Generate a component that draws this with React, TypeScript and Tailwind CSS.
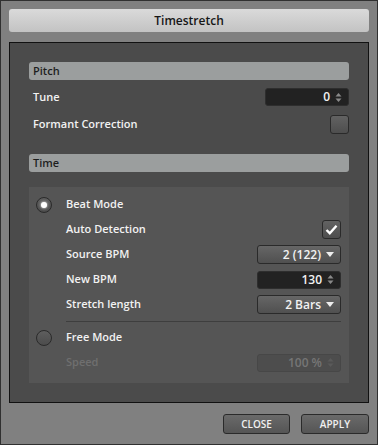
const font = { fontFamily: '"Open Sans", "Liberation Sans", sans-serif' }

function SpinArrows({ dim }: { dim?: boolean }) {
  const c = dim ? '#5a5a5a' : '#8a8a8a'
  return (
    <svg width="7" height="11" viewBox="0 0 7 11" className="ml-[5px]">
      <path d="M0.5 4.5 L3.5 1 L6.5 4.5 Z" fill={c} />
      <path d="M0.5 6.5 L3.5 10 L6.5 6.5 Z" fill={c} />
    </svg>
  )
}

function SpinBox({ value, dim }: { value: string; dim?: boolean }) {
  return (
    <div
      className={
        'flex h-[18px] w-[84px] items-center justify-end rounded-[3px] border pr-[6px] text-[12px] ' +
        (dim
          ? 'border-[#474747] bg-[#4d4d4d] text-[#767676]'
          : 'border-[#2e2e2e] bg-[#222222] text-[#f2f2f2]')
      }
    >
      <span>{value}</span>
      <SpinArrows dim={dim} />
    </div>
  )
}

function Dropdown({ value }: { value: string }) {
  return (
    <div className="flex h-[19px] w-[84px] items-center justify-end rounded-[3px] border border-[#2a2a2a] bg-gradient-to-b from-[#666666] to-[#505050] pr-[6px] text-[12px] text-[#f2f2f2]">
      <span>{value}</span>
      <svg width="8" height="5" viewBox="0 0 8 5" className="ml-[5px]">
        <path d="M0 0 L8 0 L4 5 Z" fill="#eeeeee" />
      </svg>
    </div>
  )
}

function CheckBox({ checked }: { checked?: boolean }) {
  return (
    <div className="flex h-[19px] w-[19px] items-center justify-center rounded-[3px] border border-[#2a2a2a] bg-gradient-to-b from-[#626262] to-[#4e4e4e]">
      {checked && (
        <svg width="13" height="11" viewBox="0 0 13 11">
          <path d="M1.5 6 L4.8 9.2 L11.5 1.8" fill="none" stroke="#ffffff" strokeWidth="2.4" />
        </svg>
      )}
    </div>
  )
}

function Radio({ on }: { on?: boolean }) {
  return (
    <div className="flex h-[16px] w-[16px] items-center justify-center rounded-full border border-[#2a2a2a] bg-gradient-to-b from-[#5e5e5e] to-[#4c4c4c]">
      {on && <div className="h-[6px] w-[6px] rounded-full bg-white shadow-[0_0_3px_#ffffff]" />}
    </div>
  )
}

function Header({ title }: { title: string }) {
  return (
    <div className="flex h-[18px] items-center rounded-[3px] bg-[#9b9e9e] pl-[4px] text-[11px] font-semibold text-[#1e1e1e]">
      {title}
    </div>
  )
}

export default function App() {
  return (
    <div
      style={font}
      className="flex h-[445px] w-[378px] flex-col border border-[#303030] bg-[#808080] p-[8px] antialiased"
    >
      <div className="flex h-[23px] shrink-0 items-center justify-center rounded-[3px] bg-gradient-to-b from-[#dadada] to-[#c3c3c3] text-[12px] font-semibold text-[#161616]">
        Timestretch
      </div>

      <div className="mt-[10px] flex h-[361px] shrink-0 flex-col border border-[#111111] bg-[#4b4b4b] px-[19px] pt-[19px]">
        <Header title="Pitch" />
        <div className="mt-[4px] flex h-[26px] items-center justify-between pl-[4px] text-[11px] font-semibold text-[#f2f2f2]">
          <span>Tune</span>
          <SpinBox value="0" />
        </div>
        <div className="flex h-[28px] items-center justify-between pl-[4px] text-[11px] font-semibold text-[#f2f2f2]">
          <span>Formant Correction</span>
          <CheckBox />
        </div>

        <div className="mt-[16px]">
          <Header title="Time" />
        </div>

        <div className="mt-[15px] flex h-[196px] flex-col bg-[#555555] pl-[7px] pr-[8px] pt-[5px] text-[11px] font-semibold text-[#f2f2f2]">
          <div className="flex h-[25px] items-center">
            <Radio on />
            <span className="ml-[14px]">Beat Mode</span>
          </div>
          <div className="ml-[30px] flex h-[25px] items-center justify-between">
            <span>Auto Detection</span>
            <CheckBox checked />
          </div>
          <div className="ml-[30px] flex h-[25px] items-center justify-between">
            <span>Source BPM</span>
            <Dropdown value="2 (122)" />
          </div>
          <div className="ml-[30px] flex h-[25px] items-center justify-between">
            <span>New BPM</span>
            <SpinBox value="130" />
          </div>
          <div className="ml-[30px] flex h-[25px] items-center justify-between">
            <span>Stretch length</span>
            <Dropdown value="2 Bars" />
          </div>
          <div className="ml-[30px] flex h-[8px] items-center">
            <div className="h-px w-full bg-[#3e3e3e]" />
          </div>
          <div className="flex h-[25px] items-center">
            <Radio />
            <span className="ml-[14px]">Free Mode</span>
          </div>
          <div className="ml-[30px] flex h-[25px] items-center justify-between">
            <span className="text-[#6f6f6f]">Speed</span>
            <SpinBox value="100 %" dim />
          </div>
        </div>
      </div>

      <div className="mt-[11px] flex justify-end gap-[11px]">
        <button className="flex h-[20px] w-[67px] items-center justify-center rounded-[3px] border border-[#2a2a2a] bg-gradient-to-b from-[#6a6a6a] to-[#555555] text-[10px] font-semibold text-[#f0f0f0]">
          CLOSE
        </button>
        <button className="flex h-[20px] w-[68px] items-center justify-center rounded-[3px] border border-[#2a2a2a] bg-gradient-to-b from-[#6a6a6a] to-[#555555] text-[10px] font-semibold text-[#f0f0f0]">
          APPLY
        </button>
      </div>
    </div>
  )
}
